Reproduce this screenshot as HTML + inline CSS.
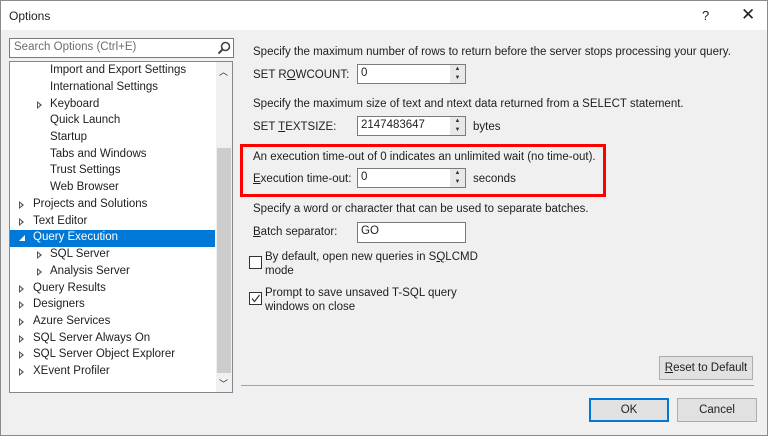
<!DOCTYPE html>
<html><head><style>
*{margin:0;padding:0;box-sizing:border-box}
body{width:768px;height:436px;background:#f0f0f0;font-family:"Liberation Sans",sans-serif;font-size:11.5px;color:#1e1e1e;position:relative;overflow:hidden;border:1px solid #8a8a8a}
.a{position:absolute;white-space:nowrap}
.title{left:0;top:0;width:766px;height:29px;background:#fff}
.inp{position:absolute;background:#fff;border:1px solid #7a7a7a;padding:2px 3px}
.spin{position:absolute;width:16px;background:#e8e8e8;border:1px solid #7a7a7a;border-left:none}
.spin div{height:50%;text-align:center;font-size:6px;line-height:9px;color:#333}
.tri{position:absolute;width:0;height:0;border-top:4px solid transparent;border-bottom:4px solid transparent;border-left:5px solid #555}
.tri::after{content:"";position:absolute;left:-4px;top:-2px;border-top:2px solid transparent;border-bottom:2px solid transparent;border-left:2.5px solid #fff}
.btn{position:absolute;background:#e1e1e1;border:1px solid #adadad;text-align:center;line-height:22px}
.cb{position:absolute;width:13px;height:13px;border:1px solid #333;background:#fff}
</style></head><body>
<div class="a title"></div>
<div class="a" style="left:8px;top:8px;font-size:12px">Options</div>
<div class="a" style="left:701px;top:7px;font-size:13px">?</div>
<div class="a" style="left:740px;top:4px;font-size:17px;font-weight:300">✕</div>

<div class="inp" style="left:8px;top:37px;width:225px;height:20px;color:#6d6d6d;padding:2px 4px">Search Options (Ctrl+E)</div>
<svg class="a" style="left:216px;top:40px" width="14" height="14"><circle cx="8.5" cy="5.5" r="4" fill="none" stroke="#444" stroke-width="1.6"/><line x1="5.5" y1="8.5" x2="1.5" y2="12.5" stroke="#444" stroke-width="2"/></svg>

<div class="a" style="left:8px;top:60px;width:224px;height:332px;background:#fff;border:1px solid #828790"></div>
<div class="a" style="left:215px;top:61px;width:16px;height:330px;background:#f0f0f0"></div>
<div class="a" style="left:216px;top:147px;width:14px;height:225px;background:#cdcdcd"></div>
<div class="a" style="left:218px;top:64px;font-size:9px">︿</div>
<div class="a" style="left:218px;top:376px;font-size:9px">﹀</div>
<div class="a" style="left:9px;top:229px;width:205px;height:17px;background:#0078d7"></div>

<div class="a" style="left:49px;top:63px">Import and Export Settings</div>
<div class="a" style="left:49px;top:80px">International Settings</div>
<div class="tri" style="left:36px;top:100px"></div><div class="a" style="left:49px;top:97px">Keyboard</div>
<div class="a" style="left:49px;top:113px">Quick Launch</div>
<div class="a" style="left:49px;top:130px">Startup</div>
<div class="a" style="left:49px;top:147px">Tabs and Windows</div>
<div class="a" style="left:49px;top:163px">Trust Settings</div>
<div class="a" style="left:49px;top:180px">Web Browser</div>
<div class="tri" style="left:18px;top:200px"></div><div class="a" style="left:32px;top:197px">Projects and Solutions</div>
<div class="tri" style="left:18px;top:217px"></div><div class="a" style="left:32px;top:214px">Text Editor</div>
<div class="a" style="left:18px;top:234px;width:0;height:0;border-left:6px solid transparent;border-bottom:6px solid #fff"></div>
<div class="a" style="left:32px;top:230px;color:#fff">Query Execution</div>
<div class="tri" style="left:36px;top:250px"></div><div class="a" style="left:49px;top:247px">SQL Server</div>
<div class="tri" style="left:36px;top:267px"></div><div class="a" style="left:49px;top:264px">Analysis Server</div>
<div class="tri" style="left:18px;top:284px"></div><div class="a" style="left:32px;top:281px">Query Results</div>
<div class="tri" style="left:18px;top:300px"></div><div class="a" style="left:32px;top:297px">Designers</div>
<div class="tri" style="left:18px;top:317px"></div><div class="a" style="left:32px;top:314px">Azure Services</div>
<div class="tri" style="left:18px;top:334px"></div><div class="a" style="left:32px;top:331px">SQL Server Always On</div>
<div class="tri" style="left:18px;top:350px"></div><div class="a" style="left:32px;top:347px">SQL Server Object Explorer</div>
<div class="tri" style="left:18px;top:367px"></div><div class="a" style="left:32px;top:364px">XEvent Profiler</div>

<div class="a" style="left:252px;top:45px">Specify the maximum number of rows to return before the server stops processing your query.</div>
<div class="a" style="left:252px;top:68px">SET R<u>O</u>WCOUNT:</div>
<div class="inp" style="left:356px;top:63px;width:94px;height:20px">0</div>
<div class="spin" style="left:449px;top:63px;height:20px"><div>▲</div><div>▼</div></div>

<div class="a" style="left:252px;top:97px">Specify the maximum size of text and ntext data returned from a SELECT statement.</div>
<div class="a" style="left:252px;top:120px">SET <u>T</u>EXTSIZE:</div>
<div class="inp" style="left:356px;top:115px;width:94px;height:20px">2147483647</div>
<div class="spin" style="left:449px;top:115px;height:20px"><div>▲</div><div>▼</div></div>
<div class="a" style="left:472px;top:120px">bytes</div>

<div class="a" style="left:239px;top:143px;width:366px;height:53px;border:3px solid #f00"></div>
<div class="a" style="left:252px;top:150px">An execution time-out of 0 indicates an unlimited wait (no time-out).</div>
<div class="a" style="left:252px;top:172px"><u>E</u>xecution time-out:</div>
<div class="inp" style="left:356px;top:167px;width:94px;height:20px">0</div>
<div class="spin" style="left:449px;top:167px;height:20px"><div>▲</div><div>▼</div></div>
<div class="a" style="left:472px;top:172px">seconds</div>

<div class="a" style="left:252px;top:202px">Specify a word or character that can be used to separate batches.</div>
<div class="a" style="left:252px;top:225px"><u>B</u>atch separator:</div>
<div class="inp" style="left:356px;top:221px;width:109px;height:21px">GO</div>

<div class="cb" style="left:248px;top:255px"></div>
<div class="a" style="left:264px;top:249px;line-height:14px">By default, open new queries in S<u>Q</u>LCMD<br>mode</div>
<div class="cb" style="left:248px;top:291px"><svg width="11" height="11" style="position:absolute;left:0;top:0"><path d="M2 5.5 L4.5 8.5 L9.5 2" fill="none" stroke="#333" stroke-width="1.2"/></svg></div>
<div class="a" style="left:264px;top:285px;line-height:14px">Prompt to save unsaved T-SQL query<br>windows on close</div>

<div class="btn" style="left:658px;top:355px;width:94px;height:24px"><u>R</u>eset to Default</div>
<div class="a" style="left:240px;top:384px;width:513px;height:1px;background:#a0a0a0"></div>
<div class="btn" style="left:588px;top:397px;width:80px;height:24px;border:1px solid #0078d7;box-shadow:inset 0 0 0 1px #0078d7">OK</div>
<div class="btn" style="left:676px;top:397px;width:80px;height:24px">Cancel</div>
</body></html>
